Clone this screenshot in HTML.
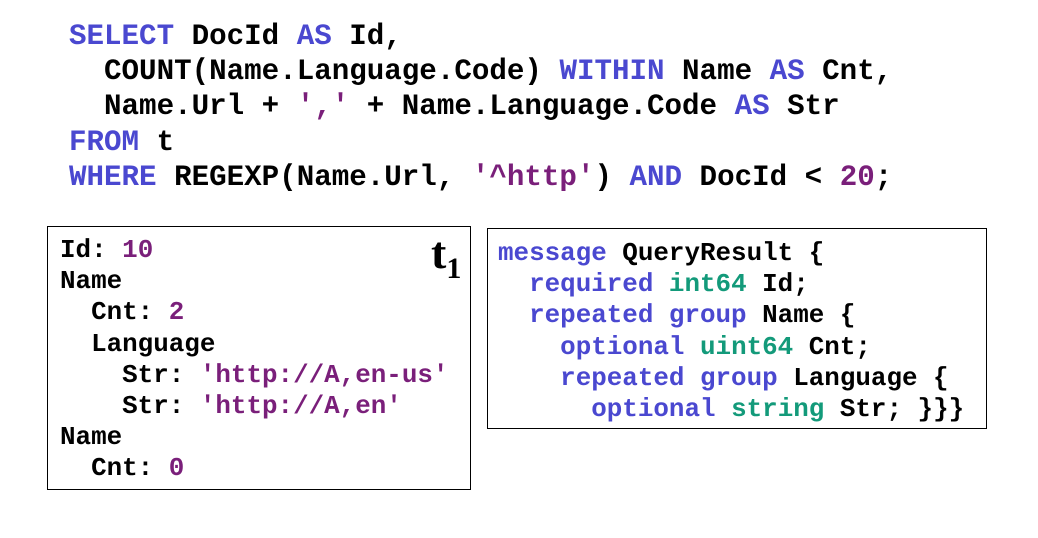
<!DOCTYPE html>
<html><head><meta charset="utf-8"><style>
body{margin:0;width:1038px;height:538px;background:#fff;position:relative;overflow:hidden;font-family:"Liberation Mono",monospace;font-weight:bold;color:#000}
pre{margin:0;position:absolute;font-family:"Liberation Mono",monospace;font-weight:bold;white-space:pre}
.k{color:#4a48d0}.s{color:#7a1f7a}.t{color:#139a7a}
.box{position:absolute;border:1.5px solid #000;box-sizing:border-box}
</style></head><body>
<pre style="left:69px;top:19px;font-size:29.2px;line-height:35.2px"><span class="k">SELECT</span> DocId <span class="k">AS</span> Id,
  COUNT(Name.Language.Code) <span class="k">WITHIN</span> Name <span class="k">AS</span> Cnt,
  Name.Url + <span class="s">','</span> + Name.Language.Code <span class="k">AS</span> Str
<span class="k">FROM</span> t
<span class="k">WHERE</span> REGEXP(Name.Url, <span class="s">'^http'</span>) <span class="k">AND</span> DocId &lt; <span class="s">20</span>;</pre>
<div class="box" style="left:47px;top:226px;width:424px;height:264px"></div>
<div class="box" style="left:487px;top:228px;width:500px;height:201px"></div>
<pre style="left:60px;top:235px;font-size:25.9px;line-height:31.2px">Id: <span class="s">10</span>
Name
  Cnt: <span class="s">2</span>
  Language
    Str: <span class="s">'http://A,en-us'</span>
    Str: <span class="s">'http://A,en'</span>
Name
  Cnt: <span class="s">0</span></pre>
<div style="position:absolute;left:431px;top:228px;font-family:'Liberation Serif',serif;font-weight:bold;font-size:46px;line-height:50px">t<span style="font-size:30px;vertical-align:-10px">1</span></div>
<pre style="left:498px;top:238px;font-size:25.9px;line-height:31.2px"><span class="k">message</span> QueryResult {
  <span class="k">required</span> <span class="t">int64</span> Id;
  <span class="k">repeated group</span> Name {
    <span class="k">optional</span> <span class="t">uint64</span> Cnt;
    <span class="k">repeated group</span> Language {
      <span class="k">optional</span> <span class="t">string</span> Str; }}}</pre>
</body></html>
